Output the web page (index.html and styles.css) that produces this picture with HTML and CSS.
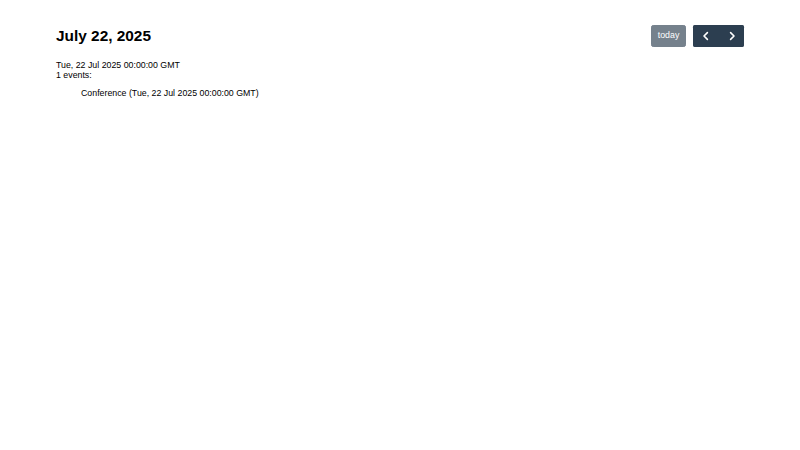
FILE: index.html
```html
<!DOCTYPE html>
<html>
<head>
<meta charset="utf-8">
<link rel="stylesheet" href="styles.css">
</head>
<body>
<div class="cal">
  <div class="toolbar">
    <h2 class="title">July 22, 2025</h2>
    <div class="chunk">
      <button class="btn btn-today" disabled>today</button>
      <div class="group">
        <button class="btn btn-icon btn-prev" aria-label="prev">
          <svg width="14" height="14" viewBox="0 0 14 14"><path d="M8.4 3.6 L5 7 L8.4 10.4" fill="none" stroke="#fff" stroke-width="1.6" stroke-linecap="round" stroke-linejoin="round"/></svg>
        </button>
        <button class="btn btn-icon btn-next" aria-label="next">
          <svg width="14" height="14" viewBox="0 0 14 14"><path d="M5.6 3.6 L9 7 L5.6 10.4" fill="none" stroke="#fff" stroke-width="1.6" stroke-linecap="round" stroke-linejoin="round"/></svg>
        </button>
      </div>
    </div>
  </div>
  <div class="view">
    <div class="date">Tue, 22 Jul 2025 00:00:00 GMT</div>
    <div class="count">1 events:</div>
    <ul class="events">
      <li>Conference (Tue, 22 Jul 2025 00:00:00 GMT)</li>
    </ul>
  </div>
</div>
</body>
</html>
```
FILE: styles.css
```css
html, body {
  margin: 0;
  padding: 0;
  background: #fff;
}
body {
  font-family: "Liberation Sans", Arial, sans-serif;
  font-size: 8.8px;
  color: #000;
}
.cal {
  padding: 25px 56px;
}
.toolbar {
  display: flex;
  justify-content: space-between;
  align-items: center;
  margin-bottom: 13.2px;
}
.title {
  margin: 0;
  font-size: 15.4px;
  font-weight: bold;
  line-height: 1.2;
}
.chunk {
  display: flex;
  align-items: center;
  gap: 7px;
}
.group {
  display: flex;
  background: #2c3e50;
  border-radius: 2.2px;
}
.btn {
  font-family: inherit;
  font-size: 8.8px;
  line-height: 1.5;
  padding: 3.5px 5.7px;
  border: 1px solid #2c3e50;
  background: #2c3e50;
  color: #fff;
  border-radius: 2.2px;
  margin: 0;
  height: 22px;
  display: flex;
  align-items: center;
  justify-content: center;
}
.btn-today {
  opacity: 0.65;
}
.btn-icon {
  padding: 0;
  border: none;
}
.btn-prev {
  width: 26px;
  border-top-right-radius: 0;
  border-bottom-right-radius: 0;
}
.btn-next {
  width: 25px;
  border-top-left-radius: 0;
  border-bottom-left-radius: 0;
}
.btn-icon svg {
  display: block;
}
.events {
  margin: 7.8px 0;
  padding-left: 25px;
  list-style: none;
}
```
